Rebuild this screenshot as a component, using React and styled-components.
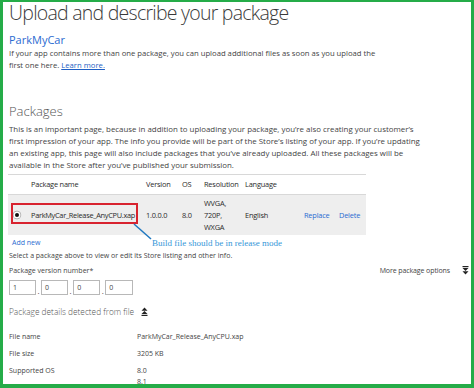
import React from 'react'
import styled, { createGlobalStyle } from 'styled-components'

const Global = createGlobalStyle`
  html, body { margin: 0; padding: 0; background: #fff; }
  body { font-family: "Open Sans", "Noto Sans", sans-serif; color: #333; }
`

const Frame = styled.div`
  position: relative;
  box-sizing: border-box;
  width: 474px;
  height: 388px;
  overflow: hidden;
  background: #fff;
  border-style: solid;
  border-color: #25ac48;
  border-width: 2px 3px 4px 3px;
  padding: 0 0 0 6px;
`

const Title = styled.h1`
  margin: 0;
  font-size: 19.5px;
  font-weight: 300;
  letter-spacing: -0.75px;
  line-height: 21px;
  color: #3a3a3a;
  white-space: nowrap;
`

const AppName = styled.div`
  margin-top: 9px;
  font-size: 11px;
  font-weight: 400;
  line-height: 16px;
  color: #2b6bd1;
`

const Para = styled.p`
  margin: ${p => p.$top || 0}px 0 0;
  font-size: ${p => p.$size || 7.9}px;
  line-height: 12.3px;
  color: #444;
  white-space: nowrap;
`

const Link = styled.a`
  color: #1f5fc4;
  text-decoration: underline;
`

const Section = styled.h2`
  margin: 30px 0 0;
  font-size: 13px;
  font-weight: 300;
  line-height: 18px;
  color: #555;
`

const Table = styled.div`
  margin-top: 2px;
  width: 358px;
  margin-left: -1px;
  border-top: 1px solid #d8d8d8;
`

const Row = styled.div`
  display: grid;
  grid-template-columns: 23px 115px 36px 22px 41px 59px 35px 1fr;
  align-items: center;
  font-size: 7.4px;
  letter-spacing: -0.2px;
  line-height: 12px;
  color: #2a2a2a;
  height: ${p => p.$h}px;
  background: ${p => (p.$selected ? '#eeeeee' : 'transparent')};
  border-bottom: ${p => (p.$selected ? 'none' : '1px solid #d8d8d8')};
`

const Cell = styled.div`
  white-space: nowrap;
  color: ${p => (p.$link ? '#2b6bd1' : 'inherit')};
  letter-spacing: ${p => (p.$tight ? '-0.3px' : 'inherit')};
`

const Radio = styled.span`
  display: block;
  margin-left: 7px;
  width: 4px;
  height: 4px;
  border-radius: 50%;
  background: #111;
  box-shadow: 0 0 0 1.5px #fff, 0 0 0 2.2px #999;
`

const Annotation = styled.div`
  position: absolute;
  left: 8px;
  top: 201px;
  width: 123px;
  height: 17px;
  border: 2px solid #d8232f;
`

const Callout = styled.svg`
  position: absolute;
  left: 128px;
  top: 221px;
`

const CalloutText = styled.div`
  position: absolute;
  left: 149px;
  top: 235px;
  font-family: "Liberation Serif", "DejaVu Serif", serif;
  font-size: 9px;
  line-height: 12px;
  color: #3596d8;
  white-space: nowrap;
`

const SmallLink = styled.div`
  margin: 3px 0 0 3px;
  font-size: 7px;
  line-height: 10px;
  color: #2b6bd1;
`

const Label = styled.div`
  margin-top: ${p => p.$top || 0}px;
  font-size: 7px;
  line-height: 11px;
  color: #444;
  white-space: nowrap;
`

const VersionLine = styled.div`
  display: flex;
  align-items: flex-end;
  justify-content: space-between;
  width: 460px;
`

const Version = styled.div`
  display: flex;
  align-items: flex-end;
  gap: 1.5px;
  margin-top: 4px;
`

const VBox = styled.div`
  box-sizing: border-box;
  width: ${p => p.$w}px;
  height: 15px;
  border: 1px solid #b8b8b8;
  font-size: 7px;
  line-height: 13px;
  padding-left: 3px;
  color: #444;
`

const Dot = styled.span`
  font-size: 8px;
  line-height: 8px;
  color: #444;
`

const Options = styled.div`
  display: flex;
  align-items: center;
  gap: 12px;
  font-size: 7px;
  line-height: 11px;
  letter-spacing: -0.1px;
  color: #444;
`

const Details = styled.div`
  display: flex;
  align-items: center;
  gap: 7px;
  margin-top: 11px;
  font-size: 8.3px;
  font-weight: 300;
  color: #555;
`

const DetailGrid = styled.div`
  display: grid;
  grid-template-columns: 128px 1fr;
  row-gap: ${p => p.$gap}px;
  margin-top: 14px;
  font-size: 7px;
  line-height: 11px;
  color: #444;
`

const Chevrons = ({ up }) => (
  <svg width="7" height="9" viewBox="0 0 7 9">
    <g fill="#222" transform={up ? 'rotate(180 3.5 4.5)' : undefined}>
      <rect x="0.5" y="0" width="6" height="1.2" />
      <polygon points="0.5,2 6.5,2 3.5,5" />
      <polygon points="0.5,5.2 6.5,5.2 3.5,8.6" />
    </g>
  </svg>
)

export default function App() {
  return (
    <>
      <Global />
      <Frame>
        <Title>Upload and describe your package</Title>
        <AppName>ParkMyCar</AppName>
        <Para $top={-1} $size={7.7}>
          If your app contains more than one package, you can upload additional files as soon as you upload the
          <br />
          first one here. <Link>Learn more.</Link>
        </Para>

        <Section>Packages</Section>
        <Para $top={3}>
          This is an important page, because in addition to uploading your package, you&#8217;re also creating your customer&#8217;s
          <br />
          first impression of your app. The info you provide will be part of the Store&#8217;s listing of your app. If you&#8217;re updating
          <br />
          an existing app, this page will also include packages that you&#8217;ve already uploaded. All these packages will be
          <br />
          available in the Store after you&#8217;ve published your submission.
        </Para>

        <Table>
          <Row $h={19}>
            <Cell />
            <Cell>Package name</Cell>
            <Cell>Version</Cell>
            <Cell>OS</Cell>
            <Cell>Resolution</Cell>
            <Cell>Language</Cell>
            <Cell />
            <Cell />
          </Row>
          <Row $selected $h={40}>
            <Cell><Radio /></Cell>
            <Cell $tight>ParkMyCar_Release_AnyCPU.xap</Cell>
            <Cell>1.0.0.0</Cell>
            <Cell>8.0</Cell>
            <Cell>WVGA,<br />720P,<br />WXGA</Cell>
            <Cell>English</Cell>
            <Cell $link>Replace</Cell>
            <Cell $link>Delete</Cell>
          </Row>
        </Table>

        <SmallLink>Add new</SmallLink>
        <Label $top={2}>Select a package above to view or edit its Store listing and other info.</Label>
        <VersionLine>
          <Label $top={4}>Package version number*</Label>
          <Options>More package options <Chevrons /></Options>
        </VersionLine>
        <Version>
          <VBox $w={27}>1</VBox><Dot>.</Dot>
          <VBox $w={27}>0</VBox><Dot>.</Dot>
          <VBox $w={27}>0</VBox><Dot>.</Dot>
          <VBox $w={28}>0</VBox>
        </Version>

        <Details>Package details detected from file <Chevrons up /></Details>
        <DetailGrid $gap={6}>
          <div>File name</div><div>ParkMyCar_Release_AnyCPU.xap</div>
          <div>File size</div><div>3205 KB</div>
          <div>Supported OS</div><div>8.0<br />8.1</div>
        </DetailGrid>

        <Annotation />
        <Callout width="24" height="20" viewBox="0 0 24 20">
          <line x1="3" y1="1" x2="20" y2="16" stroke="#1f78c0" strokeWidth="1.5" />
        </Callout>
        <CalloutText>Build file should be in release mode</CalloutText>
      </Frame>
    </>
  )
}
